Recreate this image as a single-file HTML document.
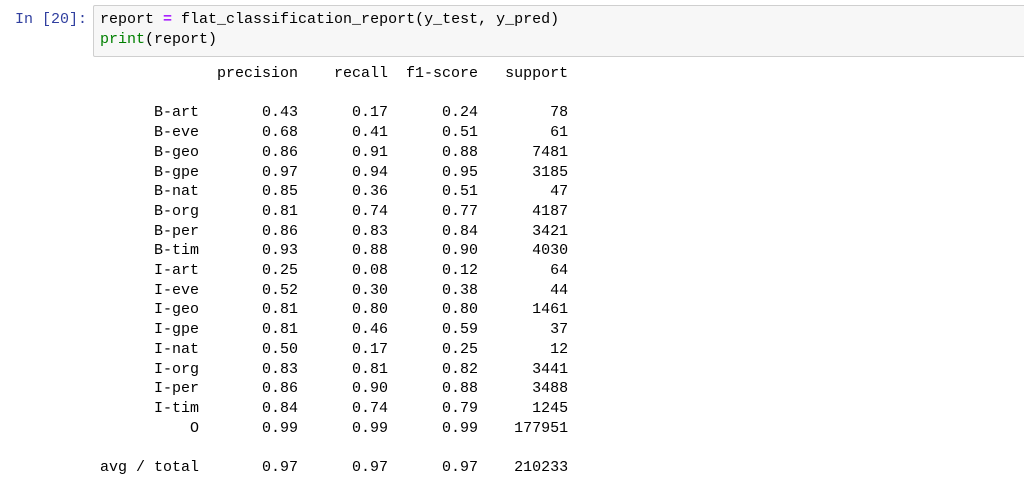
<!DOCTYPE html>
<html><head><meta charset="utf-8"><style>
body{margin:0;background:#fff;width:1024px;height:479px;overflow:hidden;font-family:"Liberation Mono",monospace;}
.p{position:absolute;font-size:15px;line-height:19.7px;white-space:pre;margin:0;color:#000;}
.prompt{left:15px;top:10px;color:#303F9F;}
.box{position:absolute;left:93px;top:5px;width:940px;height:50px;background:#f7f7f7;border:1px solid #cfcfcf;border-radius:2px;}
.code{left:100px;top:10px;}
.eq{color:#AA22FF;font-weight:bold}
.g{color:#008000}
.out{left:100px;top:64px;}
</style></head><body>
<div class="p prompt">In [20]:</div>
<div class="box"></div>
<div class="p code">report <span class="eq">=</span> flat_classification_report(y_test, y_pred)
<span class="g">print</span>(report)</div>
<pre class="p out">             precision    recall  f1-score   support

      B-art       0.43      0.17      0.24        78
      B-eve       0.68      0.41      0.51        61
      B-geo       0.86      0.91      0.88      7481
      B-gpe       0.97      0.94      0.95      3185
      B-nat       0.85      0.36      0.51        47
      B-org       0.81      0.74      0.77      4187
      B-per       0.86      0.83      0.84      3421
      B-tim       0.93      0.88      0.90      4030
      I-art       0.25      0.08      0.12        64
      I-eve       0.52      0.30      0.38        44
      I-geo       0.81      0.80      0.80      1461
      I-gpe       0.81      0.46      0.59        37
      I-nat       0.50      0.17      0.25        12
      I-org       0.83      0.81      0.82      3441
      I-per       0.86      0.90      0.88      3488
      I-tim       0.84      0.74      0.79      1245
          O       0.99      0.99      0.99    177951

avg / total       0.97      0.97      0.97    210233</pre>
</body></html>
